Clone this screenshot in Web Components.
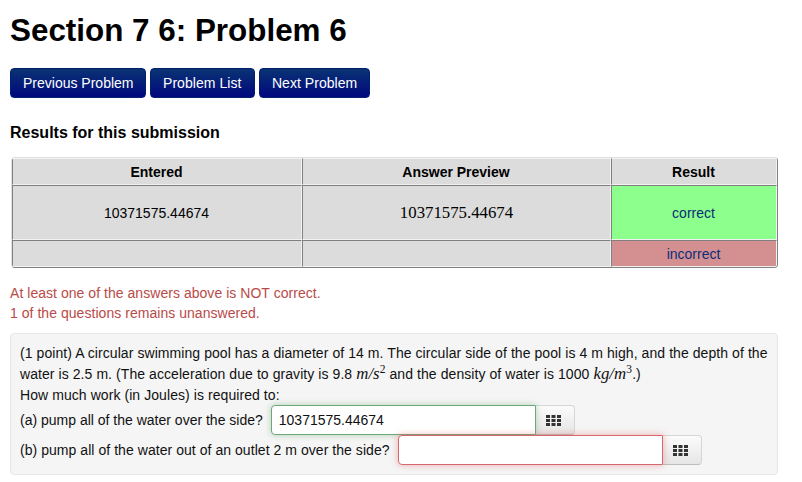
<!DOCTYPE html>
<html lang="en">
<head>
<meta charset="utf-8">
<title>Section 7 6: Problem 6</title>
<style>
  html, body { margin: 0; background: #fff; }
  body {
    padding: 0 24px 0 10px;
    font: 14px/20px "Liberation Sans", Arial, sans-serif;
    color: #111;
  }
  nav-button:first-child { letter-spacing: 0; padding-right: 11px; }
  nav-button:nth-child(2) { padding: 0 12.5px; }
</style>
</head>
<body>
  <problem-page>
    <nav-button>Previous Problem</nav-button>
    <nav-button>Problem List</nav-button>
    <nav-button>Next Problem</nav-button>
  </problem-page>

<script>
class NavButton extends HTMLElement {
  constructor() {
    super();
    this.attachShadow({ mode: 'open' });
    this.shadowRoot.innerHTML = `
      <style>
        :host {
          display: inline-flex;
          align-items: center;
          height: 30px;
          box-sizing: border-box;
          padding: 0 12px;
          color: #fff;
          font-size: 14px;
          letter-spacing: .05px;
          border: 1px solid #00216d;
          border-radius: 4px;
          background: linear-gradient(#0a3373, #00087f);
        }
      </style>
      <slot></slot>
    `;
  }
}
customElements.define('nav-button', NavButton);

class ResultsTable extends HTMLElement {
  constructor() {
    super();
    this.attachShadow({ mode: 'open' });
    this.shadowRoot.innerHTML = `
      <style>
        :host {
          display: block;
          box-sizing: border-box;
          margin: 0 0 0 1px;
          width: 767px;
          border: 1px solid #808080;
          border-top-color: #e0e0e0;
          border-left-color: #e0e0e0;
          border-radius: 4px;
          overflow: hidden;
        }
        .grid {
          display: grid;
          grid-template-columns: 290px 309px 166px;
          grid-template-rows: 27px 55px 27px;
        }
        /* inset look: every cell has dark top/left and light bottom/right */
        .cell {
          display: flex;
          align-items: center;
          justify-content: center;
          box-sizing: border-box;
          padding-right: 1px;
          background: #dcdcdc;
          background-clip: padding-box;
          color: #000;
          border: 1px solid #808080;
          border-right-color: #f2f2f2;
          border-bottom-color: #f2f2f2;
        }
        .head { font-weight: bold; border-top-color: #f2f2f2; }
        .preview { font: 16.8px "Liberation Serif", serif; padding-right: 0; }
        .ok { background-color: #8cff8c; color: #0a2d7a; }
        .bad { background-color: #d49090; color: #0a2d7a; }
      </style>
      <div class="grid">
        <div class="cell head">Entered</div>
        <div class="cell head">Answer Preview</div>
        <div class="cell head">Result</div>
        <div class="cell">10371575.44674</div>
        <div class="cell preview">10371575.44674</div>
        <div class="cell ok">correct</div>
        <div class="cell"></div>
        <div class="cell"></div>
        <div class="cell bad">incorrect</div>
      </div>
    `;
  }
}
customElements.define('results-table', ResultsTable);

class AnswerField extends HTMLElement {
  constructor() {
    super();
    this.attachShadow({ mode: 'open' });
    const state = this.getAttribute('state');
    const value = this.getAttribute('value') || '';
    this.shadowRoot.innerHTML = `
      <style>
        :host { display: inline-flex; vertical-align: top; }
        .input {
          box-sizing: border-box;
          width: 265px;
          height: 30px;
          padding: 0 7px;
          display: flex;
          align-items: center;
          background: #fff;
          color: #111;
          border-radius: 4px 0 0 4px;
          position: relative;
        }
        .good { border: 1px solid #6fa878; box-shadow: 0 0 6px rgba(90,160,100,.45); }
        .wrong { border: 1px solid #d9686e; box-shadow: 0 0 7px rgba(217,83,90,.45); }
        .btn {
          box-sizing: border-box;
          width: 39px;
          height: 30px;
          padding-right: 2px;
          display: flex;
          align-items: center;
          justify-content: center;
          border: 1px solid #d6d6d6;
          border-left: 0;
          border-bottom-color: #bdbdbd;
          border-radius: 0 4px 4px 0;
          background: linear-gradient(#fbfbfb, #e6e6e6);
        }
      </style>
      <div class="input ${state === 'good' ? 'good' : 'wrong'}">${value}</div>
      <div class="btn">
        <svg width="15" height="11" viewBox="0 0 15 11" fill="#333">
          <rect x="0" y="0" width="4" height="3"/><rect x="5.5" y="0" width="4" height="3"/><rect x="11" y="0" width="4" height="3"/>
          <rect x="0" y="4" width="4" height="3"/><rect x="5.5" y="4" width="4" height="3"/><rect x="11" y="4" width="4" height="3"/>
          <rect x="0" y="8" width="4" height="3"/><rect x="5.5" y="8" width="4" height="3"/><rect x="11" y="8" width="4" height="3"/>
        </svg>
      </div>
    `;
  }
}
customElements.define('answer-field', AnswerField);

class ProblemWell extends HTMLElement {
  constructor() {
    super();
    this.attachShadow({ mode: 'open' });
    this.shadowRoot.innerHTML = `
      <style>
        :host {
          display: block;
          box-sizing: border-box;
          width: 768px;
          height: 142px;
          padding: 9px 9px 0;
          background: #f5f5f5;
          border: 1px solid #e6e6e6;
          border-radius: 4px;
          color: #111;
        }
        p { margin: 0 0 -1px; line-height: 21px; letter-spacing: .07px; }
        .row { display: flex; align-items: center; gap: 8px; height: 30px; }
        .row.long { letter-spacing: .05px; }
        i { font: italic 16.8px/0 "Liberation Serif", serif; }
        sup { font: 11.5px/0 "Liberation Serif", serif; vertical-align: 6px; }
      </style>
      <p>(1 point) A circular swimming pool has a diameter of 14 m. The circular side of the pool is 4 m high, and the depth of the water is 2.5 m. (The acceleration due to gravity is 9.8 <i>m/s</i><sup>2</sup> and the density of water is 1000 <i>kg/m</i><sup>3</sup>.)<br>How much work (in Joules) is required to:</p>
      <div class="row">(a) pump all of the water over the side? <answer-field state="good" value="10371575.44674"></answer-field></div>
      <div class="row long">(b) pump all of the water out of an outlet 2 m over the side? <answer-field state="wrong"></answer-field></div>
    `;
  }
}
customElements.define('problem-well', ProblemWell);

class ProblemPage extends HTMLElement {
  constructor() {
    super();
    this.attachShadow({ mode: 'open' });
    this.shadowRoot.innerHTML = `
      <style>
        :host { display: block; padding-top: 13px; }
        h1 { margin: 0; font-size: 31.4px; line-height: 36px; color: #000; }
        .nav { display: flex; gap: 4px; margin-top: 19px; }
        h2 { margin: 25px 0 0; font-size: 16px; line-height: 20px; color: #000; }
        .msg { margin: 15px 0 10px; color: #b94a48; letter-spacing: .04px; }
        results-table { margin-top: 14px; }
      </style>
      <h1>Section 7 6: Problem 6</h1>
      <div class="nav"><slot></slot></div>
      <h2>Results for this submission</h2>
      <results-table></results-table>
      <div class="msg">At least one of the answers above is NOT correct.<br>1 of the questions remains unanswered.</div>
      <problem-well></problem-well>
    `;
  }
}
customElements.define('problem-page', ProblemPage);
</script>
</body>
</html>
